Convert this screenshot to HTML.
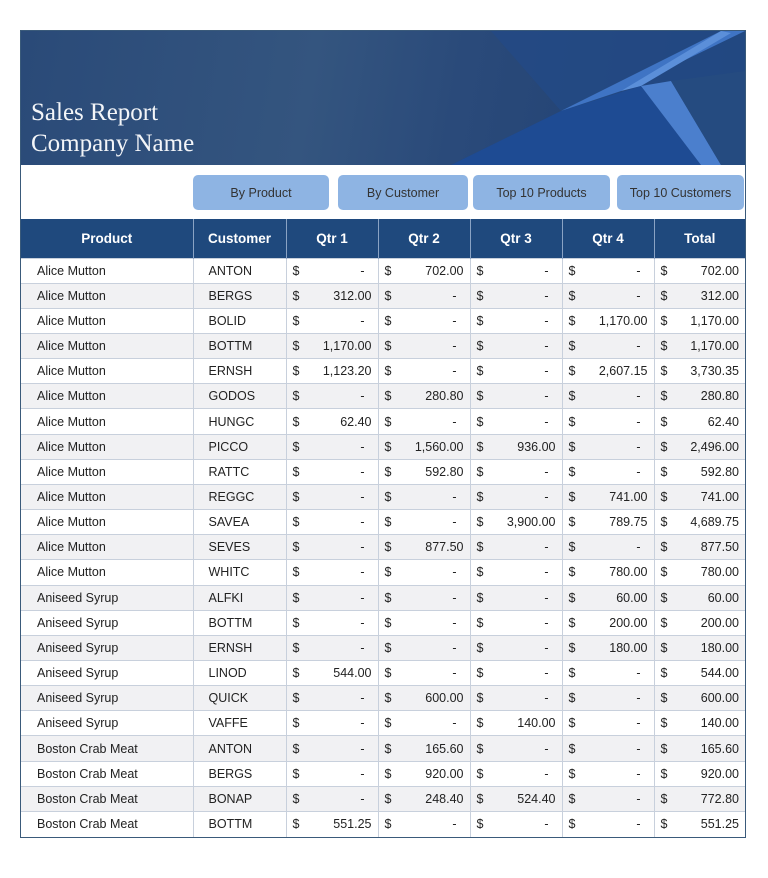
<!DOCTYPE html>
<html><head><meta charset="utf-8"><style>
*{margin:0;padding:0;box-sizing:border-box}
body{width:768px;height:878px;background:#fff;position:relative;font-family:"Liberation Sans",sans-serif;overflow:hidden}
#box{position:absolute;left:20px;top:30px;width:726px;height:808px;border:1px solid #3a5a7a;overflow:hidden}
#banner{position:absolute;left:0;top:0;width:724px;height:134px;overflow:hidden;background:linear-gradient(100deg,#2a4a78 0%,#34557f 40%,#2a4a7a 60%,#1f3f70 100%)}
#banner .t{position:absolute;left:10px;color:#f3f5f8;font-family:"Liberation Serif",serif;font-size:25px}
.btn{position:absolute;top:144px;height:35px;background:#8eb4e3;border-radius:5px;font-size:12.5px;color:#333;display:flex;align-items:center;justify-content:center}
table{position:absolute;left:0;top:188px;border-collapse:collapse;table-layout:fixed;width:724px}
th{background:#1f497d;color:#fff;font-size:13.5px;height:39px;font-weight:bold;border-left:1px solid #8aa3c4}
th:first-child{border-left:none}
td{height:25.17px;font-size:12.5px;color:#222;border-left:1px solid #c8d0dc;border-top:1px solid #c8d0dc;padding:0 6px}
td:first-child{border-left:none;padding-left:16px}
td:nth-child(2){padding-left:15px}
tr:nth-child(even) td{background:#f1f1f3}
td.m span{float:right}
</style></head><body>
<div id="box">
<div id="banner">
<svg width="724" height="134" style="position:absolute;left:0;top:0">
<polygon points="470,0 724,0 724,134 430,134 540,80" fill="#234a86" opacity="0.8"/>
<polygon points="540,80 700,0 724,0 600,60" fill="#3f74c4"/>
<polygon points="600,60 700,0 710,2 620,55" fill="#5b8fd9"/>
<polygon points="430,134 540,80 620,55 680,134" fill="#1e4b93"/>
<polygon points="620,55 650,50 700,134 680,134" fill="#4b7fcd"/>
<polygon points="650,50 724,40 724,134 700,134" fill="#254b80"/>
</svg>
<div class="t" style="top:68px">Sales Report</div>
<div class="t" style="top:99px">Company Name</div>
</div>
<div class="btn" style="left:172px;width:136px">By Product</div>
<div class="btn" style="left:317px;width:130px">By Customer</div>
<div class="btn" style="left:452px;width:137px">Top 10 Products</div>
<div class="btn" style="left:596px;width:127px">Top 10 Customers</div>
<table>
<colgroup><col style="width:172px"><col style="width:93px"><col style="width:92px"><col style="width:92px"><col style="width:92px"><col style="width:92px"><col style="width:91px"></colgroup>
<tr><th>Product</th><th>Customer</th><th>Qtr 1</th><th>Qtr 2</th><th>Qtr 3</th><th>Qtr 4</th><th>Total</th></tr>
<tbody id="tb">
<tr><td>Alice Mutton</td><td>ANTON</td><td class="m">$<span>-&nbsp;&nbsp;</span></td><td class="m">$<span>702.00</span></td><td class="m">$<span>-&nbsp;&nbsp;</span></td><td class="m">$<span>-&nbsp;&nbsp;</span></td><td class="m">$<span>702.00</span></td></tr>
<tr><td>Alice Mutton</td><td>BERGS</td><td class="m">$<span>312.00</span></td><td class="m">$<span>-&nbsp;&nbsp;</span></td><td class="m">$<span>-&nbsp;&nbsp;</span></td><td class="m">$<span>-&nbsp;&nbsp;</span></td><td class="m">$<span>312.00</span></td></tr>
<tr><td>Alice Mutton</td><td>BOLID</td><td class="m">$<span>-&nbsp;&nbsp;</span></td><td class="m">$<span>-&nbsp;&nbsp;</span></td><td class="m">$<span>-&nbsp;&nbsp;</span></td><td class="m">$<span>1,170.00</span></td><td class="m">$<span>1,170.00</span></td></tr>
<tr><td>Alice Mutton</td><td>BOTTM</td><td class="m">$<span>1,170.00</span></td><td class="m">$<span>-&nbsp;&nbsp;</span></td><td class="m">$<span>-&nbsp;&nbsp;</span></td><td class="m">$<span>-&nbsp;&nbsp;</span></td><td class="m">$<span>1,170.00</span></td></tr>
<tr><td>Alice Mutton</td><td>ERNSH</td><td class="m">$<span>1,123.20</span></td><td class="m">$<span>-&nbsp;&nbsp;</span></td><td class="m">$<span>-&nbsp;&nbsp;</span></td><td class="m">$<span>2,607.15</span></td><td class="m">$<span>3,730.35</span></td></tr>
<tr><td>Alice Mutton</td><td>GODOS</td><td class="m">$<span>-&nbsp;&nbsp;</span></td><td class="m">$<span>280.80</span></td><td class="m">$<span>-&nbsp;&nbsp;</span></td><td class="m">$<span>-&nbsp;&nbsp;</span></td><td class="m">$<span>280.80</span></td></tr>
<tr><td>Alice Mutton</td><td>HUNGC</td><td class="m">$<span>62.40</span></td><td class="m">$<span>-&nbsp;&nbsp;</span></td><td class="m">$<span>-&nbsp;&nbsp;</span></td><td class="m">$<span>-&nbsp;&nbsp;</span></td><td class="m">$<span>62.40</span></td></tr>
<tr><td>Alice Mutton</td><td>PICCO</td><td class="m">$<span>-&nbsp;&nbsp;</span></td><td class="m">$<span>1,560.00</span></td><td class="m">$<span>936.00</span></td><td class="m">$<span>-&nbsp;&nbsp;</span></td><td class="m">$<span>2,496.00</span></td></tr>
<tr><td>Alice Mutton</td><td>RATTC</td><td class="m">$<span>-&nbsp;&nbsp;</span></td><td class="m">$<span>592.80</span></td><td class="m">$<span>-&nbsp;&nbsp;</span></td><td class="m">$<span>-&nbsp;&nbsp;</span></td><td class="m">$<span>592.80</span></td></tr>
<tr><td>Alice Mutton</td><td>REGGC</td><td class="m">$<span>-&nbsp;&nbsp;</span></td><td class="m">$<span>-&nbsp;&nbsp;</span></td><td class="m">$<span>-&nbsp;&nbsp;</span></td><td class="m">$<span>741.00</span></td><td class="m">$<span>741.00</span></td></tr>
<tr><td>Alice Mutton</td><td>SAVEA</td><td class="m">$<span>-&nbsp;&nbsp;</span></td><td class="m">$<span>-&nbsp;&nbsp;</span></td><td class="m">$<span>3,900.00</span></td><td class="m">$<span>789.75</span></td><td class="m">$<span>4,689.75</span></td></tr>
<tr><td>Alice Mutton</td><td>SEVES</td><td class="m">$<span>-&nbsp;&nbsp;</span></td><td class="m">$<span>877.50</span></td><td class="m">$<span>-&nbsp;&nbsp;</span></td><td class="m">$<span>-&nbsp;&nbsp;</span></td><td class="m">$<span>877.50</span></td></tr>
<tr><td>Alice Mutton</td><td>WHITC</td><td class="m">$<span>-&nbsp;&nbsp;</span></td><td class="m">$<span>-&nbsp;&nbsp;</span></td><td class="m">$<span>-&nbsp;&nbsp;</span></td><td class="m">$<span>780.00</span></td><td class="m">$<span>780.00</span></td></tr>
<tr><td>Aniseed Syrup</td><td>ALFKI</td><td class="m">$<span>-&nbsp;&nbsp;</span></td><td class="m">$<span>-&nbsp;&nbsp;</span></td><td class="m">$<span>-&nbsp;&nbsp;</span></td><td class="m">$<span>60.00</span></td><td class="m">$<span>60.00</span></td></tr>
<tr><td>Aniseed Syrup</td><td>BOTTM</td><td class="m">$<span>-&nbsp;&nbsp;</span></td><td class="m">$<span>-&nbsp;&nbsp;</span></td><td class="m">$<span>-&nbsp;&nbsp;</span></td><td class="m">$<span>200.00</span></td><td class="m">$<span>200.00</span></td></tr>
<tr><td>Aniseed Syrup</td><td>ERNSH</td><td class="m">$<span>-&nbsp;&nbsp;</span></td><td class="m">$<span>-&nbsp;&nbsp;</span></td><td class="m">$<span>-&nbsp;&nbsp;</span></td><td class="m">$<span>180.00</span></td><td class="m">$<span>180.00</span></td></tr>
<tr><td>Aniseed Syrup</td><td>LINOD</td><td class="m">$<span>544.00</span></td><td class="m">$<span>-&nbsp;&nbsp;</span></td><td class="m">$<span>-&nbsp;&nbsp;</span></td><td class="m">$<span>-&nbsp;&nbsp;</span></td><td class="m">$<span>544.00</span></td></tr>
<tr><td>Aniseed Syrup</td><td>QUICK</td><td class="m">$<span>-&nbsp;&nbsp;</span></td><td class="m">$<span>600.00</span></td><td class="m">$<span>-&nbsp;&nbsp;</span></td><td class="m">$<span>-&nbsp;&nbsp;</span></td><td class="m">$<span>600.00</span></td></tr>
<tr><td>Aniseed Syrup</td><td>VAFFE</td><td class="m">$<span>-&nbsp;&nbsp;</span></td><td class="m">$<span>-&nbsp;&nbsp;</span></td><td class="m">$<span>140.00</span></td><td class="m">$<span>-&nbsp;&nbsp;</span></td><td class="m">$<span>140.00</span></td></tr>
<tr><td>Boston Crab Meat</td><td>ANTON</td><td class="m">$<span>-&nbsp;&nbsp;</span></td><td class="m">$<span>165.60</span></td><td class="m">$<span>-&nbsp;&nbsp;</span></td><td class="m">$<span>-&nbsp;&nbsp;</span></td><td class="m">$<span>165.60</span></td></tr>
<tr><td>Boston Crab Meat</td><td>BERGS</td><td class="m">$<span>-&nbsp;&nbsp;</span></td><td class="m">$<span>920.00</span></td><td class="m">$<span>-&nbsp;&nbsp;</span></td><td class="m">$<span>-&nbsp;&nbsp;</span></td><td class="m">$<span>920.00</span></td></tr>
<tr><td>Boston Crab Meat</td><td>BONAP</td><td class="m">$<span>-&nbsp;&nbsp;</span></td><td class="m">$<span>248.40</span></td><td class="m">$<span>524.40</span></td><td class="m">$<span>-&nbsp;&nbsp;</span></td><td class="m">$<span>772.80</span></td></tr>
<tr><td>Boston Crab Meat</td><td>BOTTM</td><td class="m">$<span>551.25</span></td><td class="m">$<span>-&nbsp;&nbsp;</span></td><td class="m">$<span>-&nbsp;&nbsp;</span></td><td class="m">$<span>-&nbsp;&nbsp;</span></td><td class="m">$<span>551.25</span></td></tr>
</tbody></table>
</div>
</body></html>
